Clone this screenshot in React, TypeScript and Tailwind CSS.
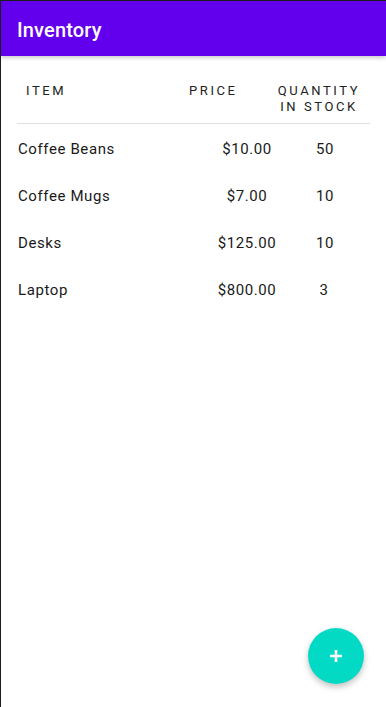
import { useState } from 'react'

interface InventoryItem {
  name: string
  price: string
  quantity: number
}

const initialItems: InventoryItem[] = [
  { name: 'Coffee Beans', price: '$10.00', quantity: 50 },
  { name: 'Coffee Mugs', price: '$7.00', quantity: 10 },
  { name: 'Desks', price: '$125.00', quantity: 10 },
  { name: 'Laptop', price: '$800.00', quantity: 3 },
]

export default function App() {
  const [items] = useState<InventoryItem[]>(initialItems)

  return (
    <div
      className="relative h-[707px] overflow-hidden border-l border-t border-[#1c1c1c] bg-white"
      style={{ fontFamily: 'Roboto, "Noto Sans", sans-serif' }}
    >
      {/* App bar */}
      <header className="relative z-10 flex h-[55px] items-center bg-[#6200ee] pt-[2px] pl-4 shadow-[0_2px_4px_rgba(0,0,0,0.2)]">
        <h1 className="text-[20px] font-medium tracking-[0.15px] text-white">Inventory</h1>
      </header>

      {/* Table */}
      <div className="mx-4">
        <div className="flex border-b border-[#e0e0e0] pt-[27px] pb-[8px] text-[13px] leading-[16px] tracking-[2.6px] text-[#222]">
          <div className="w-[172px] pl-[9px]">ITEM</div>
          <div className="w-[88px]">PRICE</div>
          <div className="w-[84px] text-center">
            QUANTITY
            <br />
            IN STOCK
          </div>
        </div>

        <div className="pt-[2px]">
          {items.map((item) => (
            <div
              key={item.name}
              className="flex h-[47px] items-center text-[15px] tracking-[0.6px] text-[#1a1a1a]"
            >
              <div className="w-[190px] pl-[1px]">{item.name}</div>
              <div className="w-[80px] text-center">{item.price}</div>
              <div className="w-[29px]" />
              <div className="w-[16px] text-center">{item.quantity}</div>
            </div>
          ))}
        </div>
      </div>

      {/* FAB */}
      <button className="absolute right-[22px] bottom-[23px] flex h-[56px] w-[56px] items-center justify-center rounded-full bg-[#03dac5] shadow-[0_3px_6px_rgba(0,0,0,0.25)]">
        <svg width="12" height="12" viewBox="0 0 12 12">
          <path d="M6 0v12M0 6h12" stroke="white" strokeWidth="2.6" />
        </svg>
      </button>
    </div>
  )
}
